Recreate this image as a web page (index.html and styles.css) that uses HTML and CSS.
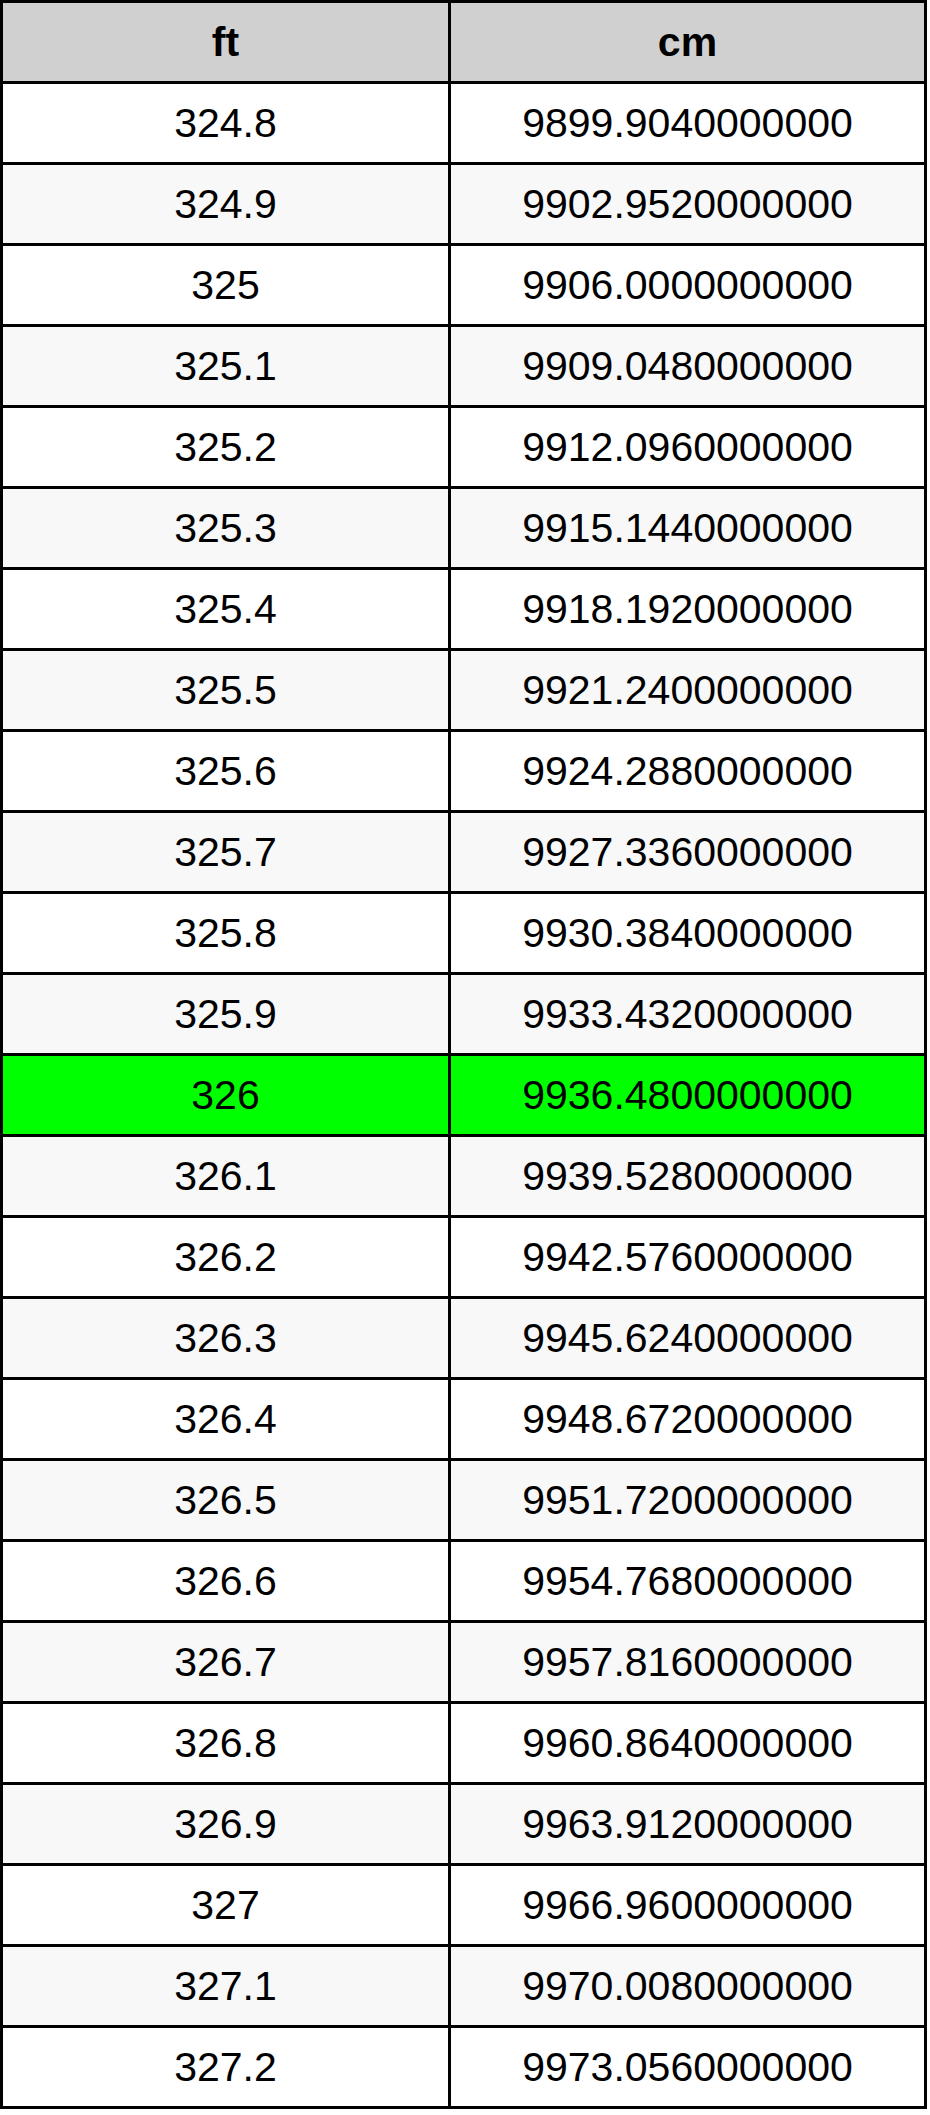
FILE: index.html
```html
<!DOCTYPE html>
<html>
<head>
<meta charset="utf-8">
<link rel="stylesheet" href="styles.css">
</head>
<body>
<div class="table">
  <div class="cell head">ft</div><div class="cell head">cm</div>
  <div class="cell">324.8</div><div class="cell">9899.9040000000</div>
  <div class="cell alt">324.9</div><div class="cell alt">9902.9520000000</div>
  <div class="cell">325</div><div class="cell">9906.0000000000</div>
  <div class="cell alt">325.1</div><div class="cell alt">9909.0480000000</div>
  <div class="cell">325.2</div><div class="cell">9912.0960000000</div>
  <div class="cell alt">325.3</div><div class="cell alt">9915.1440000000</div>
  <div class="cell">325.4</div><div class="cell">9918.1920000000</div>
  <div class="cell alt">325.5</div><div class="cell alt">9921.2400000000</div>
  <div class="cell">325.6</div><div class="cell">9924.2880000000</div>
  <div class="cell alt">325.7</div><div class="cell alt">9927.3360000000</div>
  <div class="cell">325.8</div><div class="cell">9930.3840000000</div>
  <div class="cell alt">325.9</div><div class="cell alt">9933.4320000000</div>
  <div class="cell hl">326</div><div class="cell hl">9936.4800000000</div>
  <div class="cell alt">326.1</div><div class="cell alt">9939.5280000000</div>
  <div class="cell">326.2</div><div class="cell">9942.5760000000</div>
  <div class="cell alt">326.3</div><div class="cell alt">9945.6240000000</div>
  <div class="cell">326.4</div><div class="cell">9948.6720000000</div>
  <div class="cell alt">326.5</div><div class="cell alt">9951.7200000000</div>
  <div class="cell">326.6</div><div class="cell">9954.7680000000</div>
  <div class="cell alt">326.7</div><div class="cell alt">9957.8160000000</div>
  <div class="cell">326.8</div><div class="cell">9960.8640000000</div>
  <div class="cell alt">326.9</div><div class="cell alt">9963.9120000000</div>
  <div class="cell">327</div><div class="cell">9966.9600000000</div>
  <div class="cell alt">327.1</div><div class="cell alt">9970.0080000000</div>
  <div class="cell">327.2</div><div class="cell">9973.0560000000</div>
</div>
</body>
</html>
```
FILE: styles.css
```css
html, body {
  margin: 0;
  padding: 0;
  background: #ffffff;
}
body {
  font-family: "Liberation Sans", Arial, sans-serif;
  color: #000000;
}
.table {
  display: grid;
  grid-template-columns: 445px 473px;
  grid-auto-rows: 78px;
  gap: 3px;
  width: max-content;
  background: #000000;
  border: 3px solid #000000;
}
.cell {
  display: flex;
  align-items: center;
  justify-content: center;
  background: #ffffff;
  font-size: 41px;
}
.cell.alt {
  background: #f8f8f8;
}
.cell.head {
  background: #d0d0d0;
  font-weight: bold;
}
.cell.hl {
  background: #00ff00;
}
```
